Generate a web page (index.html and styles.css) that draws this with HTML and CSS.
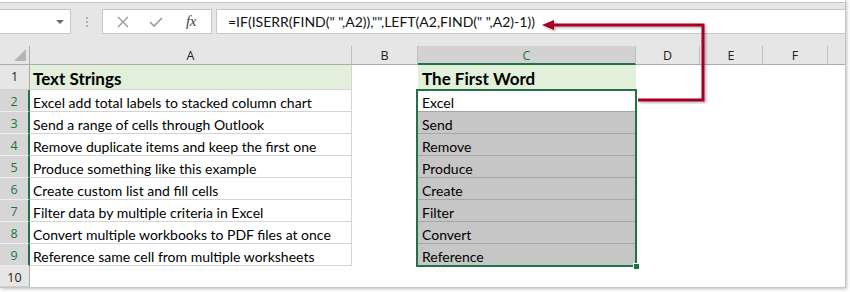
FILE: index.html
```html
<!DOCTYPE html>
<html>
<head>
<meta charset="utf-8">
<link rel="stylesheet" href="styles.css">
</head>
<body>
<div class="app">
  <div class="fbar">
    <div class="namebox"><span class="dd"></span></div>
    <div class="grip"><i></i><i></i><i></i></div>
    <div class="fbtns">
      <svg class="ic" width="14" height="14" viewBox="0 0 14 14"><path d="M2 2 L12 12 M12 2 L2 12" stroke="#9a9a9a" stroke-width="1.4" fill="none"/></svg>
      <svg class="ic" width="16" height="14" viewBox="0 0 16 14"><path d="M2 7 L6 11 L14 3" stroke="#9a9a9a" stroke-width="1.6" fill="none"/></svg>
      <span class="fx">fx</span>
    </div>
    <div class="finput">=IF(ISERR(FIND(" ",A2)),"",LEFT(A2,FIND(" ",A2)-1))</div>
  </div>
  <div class="sheet">
    <div class="ch corner"><span class="tri"></span></div>
    <div class="ch">A</div>
    <div class="ch">B</div>
    <div class="ch sel">C</div>
    <div class="ch">D</div>
    <div class="ch">E</div>
    <div class="ch">F</div>
    <div class="ch last"></div>

    <div class="rh">1</div>
    <div class="c a hd">Text Strings</div>
    <div class="c"></div>
    <div class="c hdc">The First Word</div>
    <div class="c"></div><div class="c"></div><div class="c"></div><div class="c"></div>

    <div class="rh rs">2</div>
    <div class="c a">Excel add total labels to stacked column chart</div>
    <div class="c"></div>
    <div class="c w">Excel</div>
    <div class="c"></div><div class="c"></div><div class="c"></div><div class="c"></div>

    <div class="rh rs">3</div>
    <div class="c a">Send a range of cells through Outlook</div>
    <div class="c"></div>
    <div class="c g">Send</div>
    <div class="c"></div><div class="c"></div><div class="c"></div><div class="c"></div>

    <div class="rh rs">4</div>
    <div class="c a">Remove duplicate items and keep the first one</div>
    <div class="c"></div>
    <div class="c g">Remove</div>
    <div class="c"></div><div class="c"></div><div class="c"></div><div class="c"></div>

    <div class="rh rs">5</div>
    <div class="c a">Produce something like this example</div>
    <div class="c"></div>
    <div class="c g">Produce</div>
    <div class="c"></div><div class="c"></div><div class="c"></div><div class="c"></div>

    <div class="rh rs">6</div>
    <div class="c a">Create custom list and fill cells</div>
    <div class="c"></div>
    <div class="c g">Create</div>
    <div class="c"></div><div class="c"></div><div class="c"></div><div class="c"></div>

    <div class="rh rs">7</div>
    <div class="c a">Filter data by multiple criteria in Excel</div>
    <div class="c"></div>
    <div class="c g">Filter</div>
    <div class="c"></div><div class="c"></div><div class="c"></div><div class="c"></div>

    <div class="rh rs">8</div>
    <div class="c a">Convert multiple workbooks to PDF files at once</div>
    <div class="c"></div>
    <div class="c g">Convert</div>
    <div class="c"></div><div class="c"></div><div class="c"></div><div class="c"></div>

    <div class="rh rs">9</div>
    <div class="c a">Reference same cell from multiple worksheets</div>
    <div class="c"></div>
    <div class="c g">Reference</div>
    <div class="c"></div><div class="c"></div><div class="c"></div><div class="c"></div>

    <div class="rh">10</div>
    <div class="c"></div><div class="c"></div><div class="c"></div>
    <div class="c"></div><div class="c"></div><div class="c"></div><div class="c"></div>

    <div class="selbox"><span class="handle"></span></div>
  </div>
  <svg class="arrow" width="850" height="292" viewBox="0 0 850 292">
    <defs>
      <filter id="sh" x="-5%" y="-5%" width="110%" height="110%">
        <feDropShadow dx="1.5" dy="1.5" stdDeviation="1" flood-color="#000" flood-opacity="0.3"/>
      </filter>
    </defs>
    <g filter="url(#sh)">
      <path d="M552 25 H703 V100 H638" stroke="#a50021" stroke-width="3" fill="none"/>
      <path d="M542 25 L554 20 L554 30 Z" fill="#a50021"/>
    </g>
  </svg>
</div>
</body>
</html>
```
FILE: styles.css
```css
* { box-sizing: border-box; }
html, body { margin: 0; padding: 0; background: #fff; }
body { width: 850px; height: 292px; overflow: hidden; }

.app {
  position: relative;
  width: 846px;
  height: 288px;
  display: flex;
  flex-direction: column;
  border-right: 1px solid #c6c6c6;
  border-bottom: 1px solid #c6c6c6;
  box-shadow: 1px 1px 3px rgba(0,0,0,0.25);
  font-family: Lato, "Open Sans", sans-serif;
}

.fbar {
  flex: none;
  height: 46px;
  border-top: 2px solid #fff;
  background: #e6e6e6;
  display: flex;
  align-items: flex-start;
  padding-top: 7px;
  box-shadow: inset 0 1px 0 #c6c6c6;
}
.namebox {
  width: 71px;
  height: 25px;
  background: #fff;
  border: 1px solid #c6c6c6;
  border-left: none;
  display: flex;
  align-items: center;
  justify-content: flex-end;
  padding-right: 6px;
}
.dd {
  width: 0; height: 0;
  border-left: 4px solid transparent;
  border-right: 4px solid transparent;
  border-top: 4px solid #6a6a6a;
}
.grip {
  width: 31px;
  height: 25px;
  display: flex;
  flex-direction: column;
  align-items: center;
  justify-content: center;
  gap: 2px;
}
.grip i { display: block; width: 2px; height: 2px; background: #b0b0b0; }
.fbtns {
  width: 110px;
  height: 25px;
  background: #fff;
  border: 1px solid #c6c6c6;
  display: flex;
  align-items: center;
  padding-left: 13px;
}
.fbtns .ic { margin-right: 18px; }
.fbtns .ic + .ic { margin-right: 22px; }
.fx {
  font-family: "Liberation Serif", serif;
  font-style: italic;
  font-size: 15px;
  color: #444;
  letter-spacing: -0.5px;
}
.finput {
  margin-left: 4px;
  flex: 1;
  height: 25px;
  background: #fff;
  border: 1px solid #c6c6c6;
  border-right: none;
  font-size: 14px;
  color: #111;
  line-height: 23px;
  padding-left: 11px;
  white-space: nowrap;
}

.sheet {
  flex: none;
  position: relative;
  display: grid;
  grid-template-columns: 30px 322px 66px 218px 64px 63px 65px 17px;
  grid-template-rows: 19px 25px repeat(8, 22px) 21px;
  font-size: 14px;
  color: #000;
}
.ch {
  background: #e6e6e6;
  border-bottom: 1px solid #ababab;
  border-right: 1px solid #c0c0c0;
  font-family: "Open Sans", sans-serif;
  font-size: 12.5px;
  color: #222;
  text-align: center;
  line-height: 18px;
  padding-top: 1px;
}
.ch.last { border-right: none; }
.ch.corner { position: relative; border-right: 1px solid #ababab; }
.tri {
  position: absolute;
  right: 3px; bottom: 3px;
  width: 0; height: 0;
  border-left: 12px solid transparent;
  border-bottom: 12px solid #b5b5b5;
}
.ch.sel {
  background: #d2d2d2;
  color: #217346;
  border-bottom: 2px solid #217346;
}
.rh {
  background: #e6e6e6;
  border-right: 1px solid #ababab;
  border-bottom: 1px solid #d0d0d0;
  font-family: "Open Sans", sans-serif;
  font-size: 12.5px;
  color: #222;
  text-align: center;
  line-height: 20px;
  padding-top: 2px;
}
.rh.rs {
  background: #d6d6d6;
  color: #217346;
  border-right: 2px solid #217346;
  border-bottom: 1px solid #ececec;
}
.c {
  padding-left: 3px;
  padding-top: 3px;
  line-height: 19px;
  white-space: nowrap;
  overflow: hidden;
}
.c.a {
  border-right: 1px solid #d4d4d4;
  border-bottom: 1px solid #d4d4d4;
}
.c.hd {
  background: #e2efda;
  font-weight: 700;
  font-size: 17px;
  line-height: 23px;
  padding-top: 2px;
}
.c.hdc {
  background: #e2efda;
  font-weight: 700;
  font-size: 17px;
  line-height: 23px;
  padding-top: 2px;
  padding-left: 4px;
}
.c.w {
  padding-left: 4px;
  border-bottom: 1px solid #a6a6a6;
}
.c.g {
  background: #c6c6c6;
  padding-left: 4px;
  border-bottom: 1px solid #a6a6a6;
}

.selbox {
  position: absolute;
  grid-column: 4 / 5;
  grid-row: 3 / 11;
  top: -1px;
  bottom: -1px;
  left: -2px;
  right: -1px;
  border: 2px solid #217346;
  pointer-events: none;
}
.handle {
  position: absolute;
  right: -5px;
  bottom: -5px;
  width: 7px;
  height: 7px;
  background: #217346;
  border: 1px solid #fff;
}

.arrow {
  position: absolute;
  left: 0;
  top: 0;
  pointer-events: none;
}
```
